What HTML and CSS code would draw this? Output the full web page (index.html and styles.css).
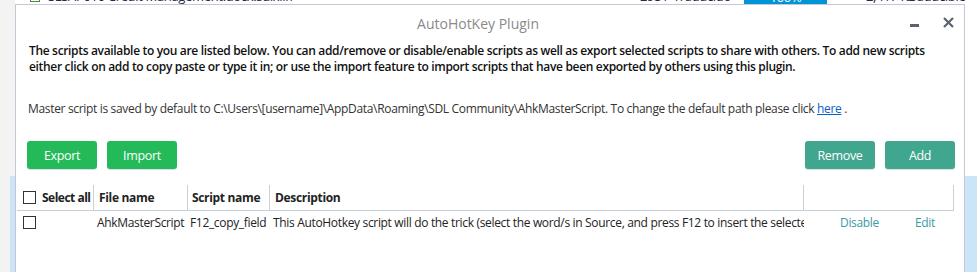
FILE: index.html
```html
<!DOCTYPE html>
<html lang="en">
<head>
    <meta charset="UTF-8">
    <title>AutoHotKey Plugin</title>
    <link rel="stylesheet" href="styles.css">
</head>
<body>
    <!-- janela de fundo (lista de ficheiros) -->
    <div class="bg-row">
        <div class="bg-line">
            <span class="bg-icon"></span>
            <span class="bg-file">SLSAP010 Credit Management.docx.sdlxliff</span>
            <span class="bg-words">2951</span>
            <span class="bg-status">Traducido</span>
            <span class="bg-bar">100%</span>
            <span class="bg-size">2,417 KB</span>
            <span class="bg-type">Traducible</span>
        </div>
    </div>

    <div class="main">
        <div class="side-left"><div class="side-blue"></div></div>

        <div class="dialog">
            <div class="titlebar">
                <div class="title">AutoHotKey Plugin</div>
                <div class="controls">
                    <span class="minimize"></span>
                    <svg class="close" width="11" height="11" viewBox="0 0 11 11">
                        <path d="M1 1 L10 10 M10 1 L1 10" stroke="#5b6270" stroke-width="2.2" fill="none"/>
                    </svg>
                </div>
            </div>

            <p class="intro">The scripts available to you are listed below. You can add/remove or disable/enable scripts as well as export selected scripts to share with others. To add new scripts either click on add to copy paste or type it in; or use the import feature to import scripts that have been exported by others using this plugin.</p>

            <p class="path">Master script is saved by default to C:\Users\[username]\AppData\Roaming\SDL Community\AhkMasterScript. To change the default path please click <a href="#">here</a> .</p>

            <div class="actions">
                <button class="btn green">Export</button>
                <button class="btn green">Import</button>
                <div class="spacer"></div>
                <button class="btn teal">Remove</button>
                <button class="btn teal">Add</button>
            </div>

            <div class="grid">
                <div class="head c1"><span class="check"></span>Select all</div>
                <div class="head c2">File name</div>
                <div class="head c3">Script name</div>
                <div class="head c4">Description</div>
                <div class="head c5"></div>

                <div class="cell c1"><span class="check"></span></div>
                <div class="cell c2">AhkMasterScript</div>
                <div class="cell c3">F12_copy_field</div>
                <div class="cell c4">This AutoHotkey script will do the trick (select the word/s in Source, and press F12 to insert the selected word/s in Target)</div>
                <div class="cell c5"><a href="#">Disable</a><a href="#">Edit</a></div>
            </div>
        </div>

        <div class="side-right"><div class="side-blue"></div></div>
    </div>
</body>
</html>
```

FILE: styles.css
```css
body {
    margin: 0;
    width: 977px;
    height: 272px;
    overflow: hidden;
    background-color: #f3f3f3;
    font-family: 'Open Sans', 'Noto Sans', sans-serif;
    letter-spacing: -0.33px;
    color: #222;
}
.bg-row {
    height: 4px;
    overflow: hidden;
    background: #fff;
    margin-left: 15px;
}
.bg-line {
    display: flex;
    align-items: center;
    height: 16px;
    margin-top: -12px;
    font-size: 13px;
    color: #1f2a44;
    white-space: nowrap;
}
.bg-icon {
    width: 10px;
    height: 12px;
    margin-left: 15px;
    border: 1px solid #4a8a3a;
    box-sizing: border-box;
}
.bg-file {
    margin-left: 8px;
    width: 592px;
}
.bg-words {
    width: 33px;
}
.bg-status {
    width: 71px;
}
.bg-bar {
    width: 83px;
    height: 16px;
    background: #0096d6;
    color: #fff;
    text-align: center;
    margin-right: 39px;
}
.bg-size {
    width: 39px;
}
.main {
    display: flex;
    height: 268px;
}
.side-left {
    width: 15px;
    padding-top: 172px;
    box-sizing: border-box;
}
.side-left .side-blue {
    margin-left: 10px;
    height: 100%;
    background: #cce4f7;
}
.side-right {
    flex: 1;
    background: #fff;
    padding-top: 172px;
    box-sizing: border-box;
}
.side-right .side-blue {
    height: 100%;
    background: #cce4f7;
}
.dialog {
    width: 950px;
    box-sizing: border-box;
    background: #fff;
    border: 1px solid #c6c6d6;
    border-bottom: none;
}
.titlebar {
    display: flex;
    align-items: center;
    height: 38px;
    padding-bottom: 2px;
    box-sizing: border-box;
}
.title {
    flex: 1;
    text-align: center;
    padding-left: 30px;
    font-size: 14px;
    letter-spacing: 0;
    color: #8a8a8a;
}
.controls {
    display: flex;
    align-items: center;
    gap: 24px;
    width: 54px;
    margin-top: -2px;
}
.minimize {
    width: 9px;
    height: 3px;
    margin-top: 6px;
    background: #5b6270;
}
.intro {
    margin: 0 0 0 13px;
    width: 905px;
    font-size: 12px;
    font-weight: 600;
    line-height: 16px;
    color: #111;
}
.path {
    margin: 26px 0 0 12px;
    font-size: 12px;
    line-height: 16px;
    color: #333;
}
.path a {
    color: #0a62c8;
}
.actions {
    display: flex;
    gap: 10px;
    margin: 24px 9px 0 11px;
}
.spacer {
    flex: 1;
}
.btn {
    width: 70px;
    height: 28px;
    border: none;
    border-radius: 3px;
    font-family: inherit;
    font-size: 12.5px;
    letter-spacing: inherit;
    color: #fff;
    box-shadow: 0 1px 0 rgba(0, 0, 0, 0.12);
}
.green {
    background-color: #24ba5a;
}
.teal {
    background-color: #41a68e;
}
.grid {
    display: grid;
    grid-template-columns: 77px 94px 82px 534px 150px;
    margin: 16px 0 0 1px;
    font-size: 12px;
}
.head {
    display: flex;
    align-items: center;
    height: 25px;
    font-weight: 700;
    white-space: nowrap;
    border-right: 1px solid #cfcfcf;
    border-bottom: 1px solid #c5d0da;
}
.head.c1 {
    padding-left: 6px;
    letter-spacing: -0.5px;
}
.head.c2, .head.c4 {
    padding-left: 5px;
}
.head.c3 {
    padding-left: 4px;
}
.head.c1 .check {
    margin-right: 6px;
}
.check {
    display: inline-block;
    flex-shrink: 0;
    width: 13px;
    height: 13px;
    border: 1px solid #333;
    box-sizing: border-box;
    background: #fff;
}
.cell {
    height: 24px;
    line-height: 24px;
    white-space: nowrap;
    overflow: hidden;
    color: #222;
}
.cell.c1 {
    padding-left: 6px;
    padding-top: 5px;
    line-height: 13px;
}
.cell.c2 {
    padding-left: 3px;
}
.cell.c3 {
    padding-left: 2px;
}
.cell.c4 {
    padding-left: 3px;
}
.cell.c5 {
    display: flex;
    gap: 36px;
    padding-left: 36px;
}
.cell.c5 a {
    color: #3a9aa6;
    text-decoration: none;
}
```
